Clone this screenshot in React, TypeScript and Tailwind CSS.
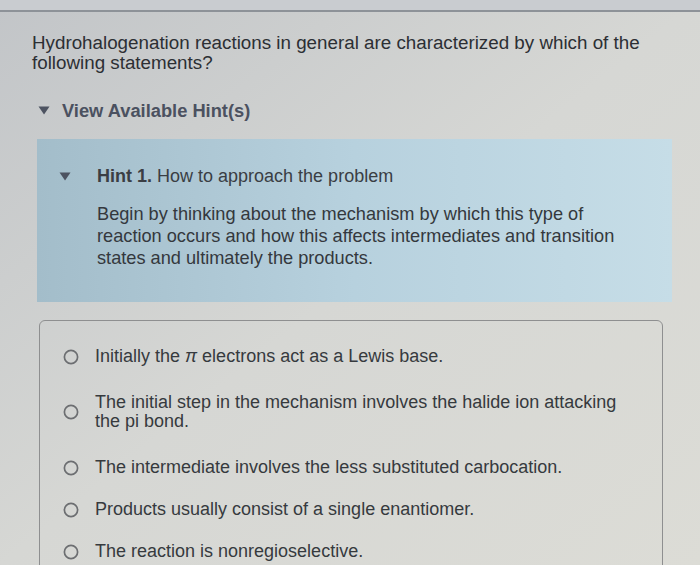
import React from "react";

const Radio = () => (
  <svg width="16" height="16" viewBox="0 0 16 16" className="shrink-0">
    <circle cx="8" cy="8" r="6.6" fill="none" stroke="#6c6e71" strokeWidth="1.7" />
  </svg>
);

const Caret = () => (
  <svg width="12" height="9" viewBox="0 0 12 9" className="shrink-0">
    <path d="M0.5 0.5 L11.5 0.5 L6 8.5 Z" fill="#4d5361" />
  </svg>
);

const options = [
  <>Initially the <span className="italic">π</span> electrons act as a Lewis base.</>,
  <>The initial step in the mechanism involves the halide ion attacking the pi bond.</>,
  <>The intermediate involves the less substituted carbocation.</>,
  <>Products usually consist of a single enantiomer.</>,
  <>The reaction is nonregioselective.</>,
];

export default function App() {
  return (
    <div
      className="w-[700px] h-[565px] overflow-hidden bg-linear-to-br from-[#c2c5c8] via-[#d6d7d4] to-[#dcdcd6] text-[#34373b]"
      style={{ fontFamily: '"Liberation Sans", Arial, sans-serif' }}
    >
      {/* top bar */}
      <div className="h-[10px] bg-[#c9ccd0]" />
      <div className="h-[2px] bg-[#8d9298]" />

      {/* question */}
      <p className="px-[32px] pt-[21px] w-[680px] text-[18.8px] leading-[20px] text-[#2c2f34]">
        Hydrohalogenation reactions in general are characterized by which of the following statements?
      </p>

      {/* hints toggle */}
      <div className="flex items-center gap-[12px] pl-[38px] mt-[24px]">
        <Caret />
        <span className="text-[18.3px] font-bold text-[#4b5160]">View Available Hint(s)</span>
      </div>

      {/* hint box */}
      <div className="ml-[37px] mt-[15px] w-[635px] h-[163px] bg-linear-to-r from-[#a3bdca] via-[#b7d1de] to-[#c6dde7] pl-[22px] pt-[26px]">
        <div className="flex items-center gap-[26px]">
          <Caret />
          <p className="text-[18px] leading-[22px] text-[#3a3e44]">
            <span className="font-bold">Hint 1.</span> How to approach the problem
          </p>
        </div>
        <p className="ml-[38px] mt-[16px] w-[525px] text-[18.2px] leading-[22px] text-[#34383d]">
          Begin by thinking about the mechanism by which this type of reaction occurs and how this affects intermediates and transition states and ultimately the products.
        </p>
      </div>

      {/* options */}
      <div className="ml-[39px] mt-[18px] w-[624px] h-[260px] rounded-md border border-[#8e8f90] pl-[23px] pt-[26px]">
        <ul className="flex flex-col gap-[23px]">
          {options.map((o, i) => (
            <li key={i} className={`flex items-center gap-[16px] ${i === 1 ? "py-[4px]" : ""}`}>
              <Radio />
              <span className="w-[530px] text-[18px] leading-[19px] text-[#363a3e]">{o}</span>
            </li>
          ))}
        </ul>
      </div>
    </div>
  );
}
